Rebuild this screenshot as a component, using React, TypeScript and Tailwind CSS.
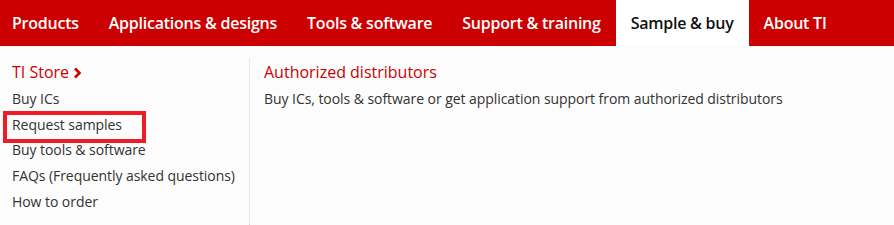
import React from "react";

const navItems = [
  "Products",
  "Applications & designs",
  "Tools & software",
  "Support & training",
  "Sample & buy",
  "About TI",
];

const links = [
  "Buy ICs",
  "Request samples",
  "Buy tools & software",
  "FAQs (Frequently asked questions)",
  "How to order",
];

export default function App() {
  return (
    <div
      className="w-[894px] h-[225px] overflow-hidden bg-[#fcfcfc]"
      style={{ fontFamily: '"Open Sans", "Noto Sans", sans-serif' }}
    >
      <nav className="h-[46px] bg-[#cc0000] flex items-stretch">
        {navItems.map((item, i) => {
          const active = item === "Sample & buy";
          return (
            <div
              key={item}
              className={
                (active ? "bg-white text-[#111111] " : "text-white ") +
                (i === 0 ? "pl-[12px] pr-[15px] " : "px-[15px] ") +
                "flex items-center text-[16px] tracking-[-0.24px] font-semibold leading-none whitespace-nowrap"
              }
            >
              {item}
            </div>
          );
        })}
      </nav>
      <div className="flex">
        <div className="w-[249px] shrink-0 pl-[12px] pt-[13px]">
          <div className="flex items-center text-[16px] leading-[26px] text-[#cc0000]">
            TI Store
            <svg
              width="9"
              height="12"
              viewBox="0 0 9 12"
              className="ml-[4px] mt-[1px]"
            >
              <path
                d="M2 1.5 L6.5 6 L2 10.5"
                fill="none"
                stroke="#cc0000"
                strokeWidth="2.6"
              />
            </svg>
          </div>
          <ul className="mt-[1px]">
            {links.map((l) => (
              <li
                key={l}
                className={
                  "text-[14px] tracking-[-0.06px] leading-[25.7px] text-[#333333] whitespace-nowrap " +
                  (l === "Request samples" ? "relative" : "")
                }
              >
                {l}
                {l === "Request samples" && (
                  <span className="absolute left-[-9px] top-[-1px] w-[143px] h-[32px] border-[4px] border-[#ee1c25]" />
                )}
              </li>
            ))}
          </ul>
        </div>
        <div className="flex-1 mt-[13px] h-[166px] border-l border-dotted border-[#d6d6d6] pl-[14px]">
          <div className="text-[16px] leading-[26px] text-[#cc0000]">
            Authorized distributors
          </div>
          <div className="mt-[1px] text-[14px] tracking-[-0.06px] leading-[25.7px] text-[#333333]">
            Buy ICs, tools &amp; software or get application support from
            authorized distributors
          </div>
        </div>
      </div>
    </div>
  );
}
